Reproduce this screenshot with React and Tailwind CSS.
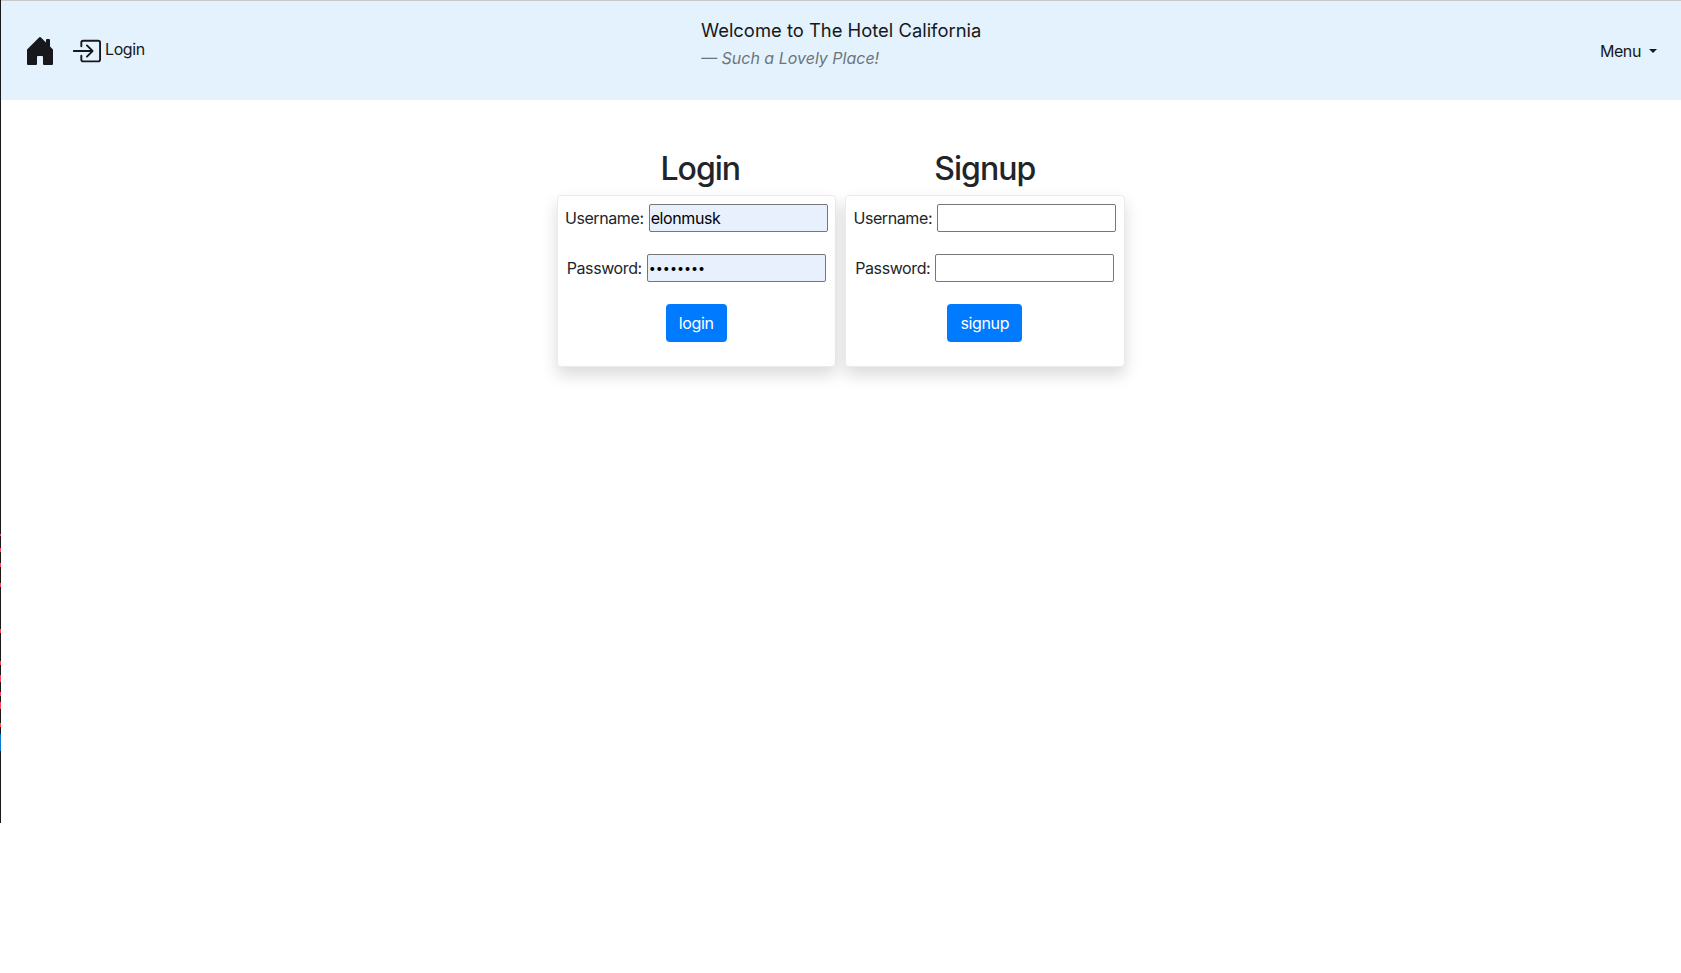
import React from "react";
import { BsHouseDoorFill, BsBoxArrowInRight } from "react-icons/bs";

const ticks = [
  { y: 534, h: 2, c: "bg-[#ff4455]" },
  { y: 548, h: 4, c: "bg-[#ff4455]" },
  { y: 563, h: 4, c: "bg-[#ff4455]" },
  { y: 583, h: 4, c: "bg-[#ff4455]" },
  { y: 629, h: 4, c: "bg-[#ff4455]" },
  { y: 661, h: 4, c: "bg-[#ff4455]" },
  { y: 675, h: 7, c: "bg-[#ff4455]" },
  { y: 692, h: 4, c: "bg-[#ff4455]" },
  { y: 702, h: 7, c: "bg-[#ff4455]" },
  { y: 723, h: 4, c: "bg-[#ff4455]" },
  { y: 734, h: 17, c: "bg-[#0a7ad6]" },
];

function Row({ label, type, value, filled }) {
  return (
    <div className="flex h-[28px] items-center justify-center gap-[5px]">
      <label className="text-[16px] leading-[24px] tracking-[-0.4px] text-[#212529]">{label}</label>
      <input
        type={type}
        defaultValue={value}
        className={`h-[28px] w-[179px] rounded-[2px] border border-[#767676] px-px text-black outline-none ${type === "password" ? "text-[12.5px]" : "text-[16px] tracking-[-0.4px]"} ${filled ? "bg-[#e8f0fe]" : "bg-white"}`}
      />
    </div>
  );
}

function Panel({ title, action, value, pass, className }) {
  return (
    <section className="flex w-[279.5px] flex-col">
      <h2 className={`h-[48px] pt-[3px] text-center text-[32px] leading-[38px] font-medium tracking-[-1px] text-[#212529] ${className}`}>{title}</h2>
      <div className="flex h-[172px] flex-col gap-[22px] rounded-[4px] border border-[#e9ecef] bg-white px-[8px] pt-[8px] shadow-[0_8px_16px_rgba(0,0,0,0.15)]">
        <Row label="Username:" type="text" value={value} filled={!!value} />
        <Row label="Password:" type="password" value={pass} filled={!!pass} />
        <div className="flex justify-center">
          <button className="h-[38px] rounded-[4px] bg-[#007bff] px-[13px] text-[16px] tracking-[-0.35px] text-white">{action}</button>
        </div>
      </div>
    </section>
  );
}

export default function App() {
  return (
    <div className="relative min-h-[973px] bg-white font-['Inter',sans-serif]">
      <div className="absolute top-0 left-0 h-[823px] w-px bg-[#1a1a1a]">
        {ticks.map((t) => (
          <div key={t.y} className={`absolute left-0 w-px ${t.c}`} style={{ top: t.y, height: t.h }} />
        ))}
      </div>
      <header className="flex h-[100px] items-start border-t border-[#c8c8c8] bg-[#e3f2fd]">
        <div className="flex w-[701px] shrink-0 items-center pt-[34px] pl-[24px] text-[#16181b]">
          <BsHouseDoorFill className="h-[32px] w-[32px]" />
          <BsBoxArrowInRight className="ml-[15px] h-[30px] w-[30px]" />
          <span className="ml-[4px] -translate-y-[2px] text-[16px] leading-[24px] tracking-[-0.4px]">Login</span>
        </div>
        <div className="flex-1 pt-[16px]">
          <div className="text-[18.4px] leading-[26px] text-[#16181b]">Welcome to The Hotel California</div>
          <div className="mt-[2px] text-[16px] leading-[26px] text-[#6c757d] italic">— Such a Lovely Place!</div>
        </div>
        <div className="flex items-center gap-[8px] pt-[38px] pr-[24px] text-[16px] leading-[24px] tracking-[-0.4px] text-[#16181b]">
          <span>Menu</span>
          <span className="h-0 w-0 border-x-[4px] border-t-[4px] border-x-transparent border-t-[#16181b]" />
        </div>
      </header>
      <main className="flex justify-center gap-[9px] pt-[47px]">
        <Panel title="Login" action="login" value="elonmusk" pass="password" className="pl-[8px]" />
        <Panel title="Signup" action="signup" />
      </main>
    </div>
  );
}
